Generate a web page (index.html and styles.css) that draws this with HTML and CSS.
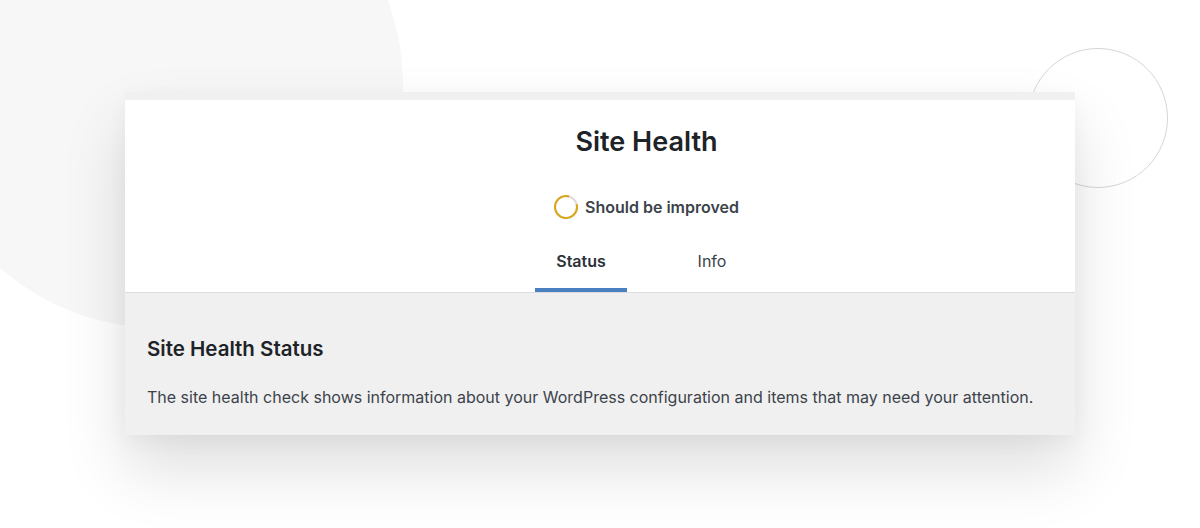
FILE: index.html
```html
<!DOCTYPE html>
<html lang="en">
<head>
  <meta charset="UTF-8">
  <meta name="viewport" content="width=device-width, initial-scale=1.0">
  <title>Site Health</title>
  <link rel="stylesheet" href="styles.css">
</head>
<body>
  <div class="bg-blob"></div>
  <div class="bg-ring"></div>

  <div class="page">
    <div class="health-card">
      <div class="card-strip"></div>

      <div class="health-header">
        <h1 class="health-title">Site Health</h1>
        <div class="health-progress">
          <svg class="progress-ring" width="24" height="24" viewBox="0 0 24 24">
            <circle cx="12" cy="12" r="11" fill="none" stroke="#dcdcde" stroke-width="2"/>
            <circle cx="12" cy="12" r="11" fill="none" stroke="#dba617" stroke-width="2"
              stroke-dasharray="57.6 11.5" transform="rotate(-15 12 12)"/>
          </svg>
          <span>Should be improved</span>
        </div>
        <nav class="health-tabs">
          <a class="health-tab active">Status</a>
          <a class="health-tab">Info</a>
        </nav>
      </div>

      <div class="health-body">
        <h2 class="body-title">Site Health Status</h2>
        <p class="body-text">The site health check shows information about your WordPress configuration and items that may need your attention.</p>
      </div>
    </div>
  </div>
</body>
</html>
```
FILE: styles.css
```css
html, body {
  margin: 0;
  padding: 0;
}
body {
  background-color: #fff;
  font-family: Inter, "Noto Sans", Arial, sans-serif;
  color: #1d2327;
  width: 1200px;
  height: 528px;
  overflow: hidden;
  position: relative;
}
.bg-blob {
  position: absolute;
  left: -83px;
  top: -158px;
  width: 486px;
  height: 486px;
  border-radius: 50%;
  background-color: #f7f7f7;
}
.bg-ring {
  position: absolute;
  left: 1028px;
  top: 48px;
  width: 138px;
  height: 138px;
  border-radius: 50%;
  border: 1px solid #d6d6d6;
}
.page {
  position: relative;
  padding-top: 92px;
}
.health-card {
  width: 950px;
  margin-left: 125px;
  background-color: #f0f0f1;
  box-shadow: 0 34px 60px rgba(0, 0, 0, 0.13), 0 6px 20px rgba(0, 0, 0, 0.04);
}
.card-strip {
  height: 8px;
  background-color: #f0f0f1;
}
.health-header {
  background-color: #fff;
  border-bottom: 1px solid #dcdcde;
  padding: 24px 0 0 93px;
  text-align: center;
}
.health-title {
  margin: 0;
  font-size: 27px;
  line-height: 36px;
  font-weight: 600;
  color: #1d2327;
}
.health-progress {
  margin-top: 35px;
  display: flex;
  justify-content: center;
  align-items: center;
  gap: 7px;
  height: 24px;
  font-size: 16px;
  font-weight: 600;
  color: #3c434a;
}
.progress-ring {
  display: block;
}
.health-tabs {
  margin-top: 15px;
  display: flex;
  justify-content: center;
  gap: 39px;
}
.health-tab {
  width: 92px;
  padding: 17px 0;
  line-height: 20px;
  font-size: 16px;
  color: #3c434a;
  border-bottom: 4px solid transparent;
}
.health-tab.active {
  font-weight: 600;
  color: #2c3338;
  border-bottom-color: #4a80c0;
}
.health-body {
  padding: 41px 22px 26px;
}
.body-title {
  margin: 0;
  font-size: 20.5px;
  line-height: 30px;
  font-weight: 600;
  color: #1d2327;
}
.body-text {
  margin: 21px 0 0;
  font-size: 16px;
  line-height: 24px;
  color: #3c434a;
}
```
